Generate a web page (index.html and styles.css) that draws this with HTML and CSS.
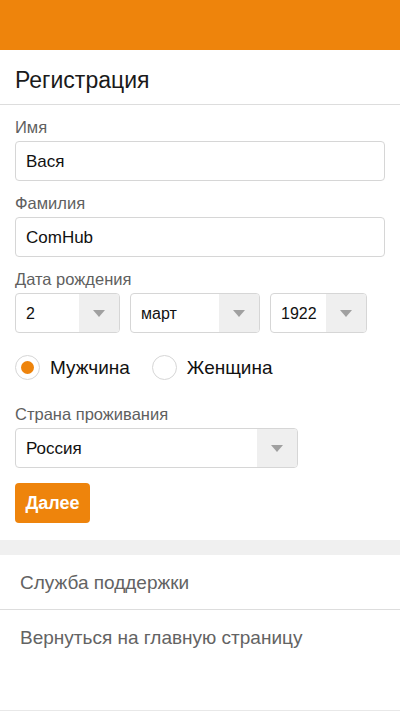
FILE: index.html
```html
<!DOCTYPE html>
<html lang="ru">
<head>
<meta charset="utf-8">
<link rel="stylesheet" href="styles.css">
</head>
<body>
<header class="topbar"></header>
<h1 class="title">Регистрация</h1>
<form class="form">
  <div class="field">
    <div class="label">Имя</div>
    <div class="input">Вася</div>
  </div>
  <div class="field">
    <div class="label">Фамилия</div>
    <div class="input">ComHub</div>
  </div>
  <div class="field">
    <div class="label">Дата рождения</div>
    <div class="date-row">
      <div class="select s-day"><span class="value">2</span><span class="arrow"></span></div>
      <div class="select s-month"><span class="value">март</span><span class="arrow"></span></div>
      <div class="select s-year"><span class="value">1922</span><span class="arrow"></span></div>
    </div>
  </div>
  <div class="radios">
    <label class="radio"><span class="circle checked"></span>Мужчина</label>
    <label class="radio"><span class="circle"></span>Женщина</label>
  </div>
  <div class="field">
    <div class="label">Страна проживания</div>
    <div class="select s-country"><span class="value">Россия</span><span class="arrow"></span></div>
  </div>
  <div class="btn">Далее</div>
</form>
<div class="band"></div>
<nav class="links">
  <div class="link">Служба поддержки</div>
  <div class="link">Вернуться на главную страницу</div>
</nav>
</body>
</html>
```
FILE: styles.css
```css
html, body {
  margin: 0;
  padding: 0;
  background: #fff;
  font-family: "Liberation Sans", Arial, sans-serif;
  color: #111;
}
body {
  height: 711px;
  overflow: hidden;
  border-bottom: 1px solid #e8e8e8;
  box-sizing: border-box;
}
.topbar {
  height: 50px;
  background: #ee840c;
}
.title {
  margin: 0;
  padding: 0 15px;
  height: 54px;
  line-height: 60px;
  font-size: 23px;
  font-weight: normal;
  color: #1a1a1a;
  border-bottom: 1px solid #ddd;
}
.form {
  padding: 12px 15px 0;
  display: flex;
  flex-direction: column;
}
.field {
  display: flex;
  flex-direction: column;
  margin-bottom: 12px;
}
.label {
  font-size: 16.5px;
  color: #5f5f5f;
  line-height: 20px;
  margin-bottom: 4px;
}
.input {
  box-sizing: border-box;
  height: 40px;
  border: 1px solid #d6d6d6;
  border-radius: 4px;
  padding: 2px 10px 0;
  display: flex;
  align-items: center;
  font-size: 17px;
  color: #111;
}
.date-row {
  display: flex;
  gap: 10px;
}
.select {
  height: 38px;
  border: 1px solid #d6d6d6;
  border-radius: 4px;
  display: flex;
  align-items: stretch;
  overflow: hidden;
  font-size: 16px;
}
.select .value {
  flex: 1;
  display: flex;
  align-items: center;
  padding: 2px 0 0 10px;
  color: #111;
}
.select .arrow {
  width: 40px;
  background: #efefef;
  position: relative;
}
.select .arrow::after {
  content: "";
  position: absolute;
  left: 14px;
  top: 16px;
  border-left: 6px solid transparent;
  border-right: 6px solid transparent;
  border-top: 7px solid #a0a0a0;
}
.s-day { width: 103px; }
.s-month { width: 128px; }
.s-year { width: 95px; }
.s-country { width: 281px; font-size: 17px; }
.radios {
  display: flex;
  gap: 22px;
  margin: 10px 0 24px;
}
.radio {
  display: flex;
  align-items: center;
  font-size: 19px;
  color: #111;
  gap: 10px;
}
.circle {
  width: 23px;
  height: 23px;
  border: 1px solid #d6d6d6;
  border-radius: 50%;
  position: relative;
  background: #fff;
}
.circle.checked::after {
  content: "";
  position: absolute;
  left: 5px;
  top: 5px;
  width: 13px;
  height: 13px;
  border-radius: 50%;
  background: #ee840c;
}
.btn {
  align-self: flex-start;
  margin-top: 3px;
  height: 40px;
  width: 75px;
  box-sizing: border-box;
  border-radius: 4px;
  background: #ee840c;
  color: #fff;
  font-weight: bold;
  font-size: 18px;
  display: flex;
  align-items: center;
  justify-content: center;
}
.band {
  margin-top: 17px;
  height: 15px;
  background: #f0f0f0;
}
.links {
  display: flex;
  flex-direction: column;
}
.link {
  box-sizing: border-box;
  height: 54px;
  padding: 2px 0 0 20px;
  display: flex;
  align-items: center;
  font-size: 19px;
  color: #636363;
}
.link + .link {
  border-top: 1px solid #ddd;
}
```
